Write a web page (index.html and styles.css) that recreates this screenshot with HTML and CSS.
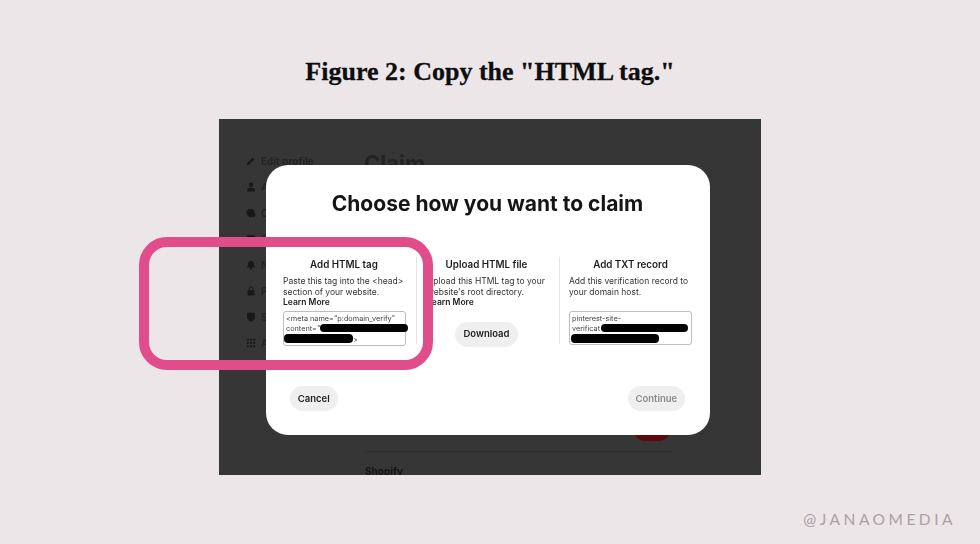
FILE: index.html
```html
<!DOCTYPE html>
<html lang="en">
<head>
<meta charset="utf-8">
<title>Figure 2</title>
<link rel="stylesheet" href="styles.css">
</head>
<body>
<main class="slide">
  <h1 class="title">Figure 2: Copy the "HTML tag."</h1>
  <section class="shot">
    <div class="app">
      <nav class="side">
        <div class="side-item"><svg class="ic" viewBox="0 0 12 12"><path d="M1 11l.6-2.6L8 2l2 2-6.400 6.400z"/></svg><span>Edit profile</span></div>
        <div class="side-item"><svg class="ic" viewBox="0 0 12 12"><circle cx="6" cy="3.200" r="2.700"/><path d="M1.500 11.500V9.500C1.500 7.500 3.500 6.800 6 6.800s4.500.7 4.500 2.700v2z"/></svg><span>Account</span></div>
        <div class="side-item"><svg class="ic" viewBox="0 0 12 12"><circle cx="5.500" cy="6" r="5"/><circle cx="9" cy="8.500" r="2.500"/></svg><span>Claim</span></div>
        <div class="side-item"><svg class="ic" viewBox="0 0 12 12"><rect x="1" y="1.500" width="10" height="9" rx="1.500"/></svg><span>Tune</span></div>
        <div class="side-item"><svg class="ic" viewBox="0 0 12 12"><path d="M6 .8c2.500 0 3.600 2 3.600 4.200 0 2 1.400 3 1.400 4H1c0-1 1.400-2 1.400-4C2.400 2.800 3.500.8 6 .8z"/><circle cx="6" cy="10.300" r="1.400"/></svg><span>Notifications</span></div>
        <div class="side-item"><svg class="ic" viewBox="0 0 12 12"><rect x="1.800" y="5" width="8.400" height="6.500" rx="1.500"/><path class="ln" d="M3.700 5.500V3.500a2.300 2.300 0 0 1 4.600 0v2"/></svg><span>Privacy</span></div>
        <div class="side-item"><svg class="ic" viewBox="0 0 12 12"><path d="M1.200 1h9.600v5c0 3-2.500 4.800-4.800 5.800C3.700 10.800 1.200 9 1.200 6z"/></svg><span>Security</span></div>
        <div class="side-item"><svg class="ic" viewBox="0 0 12 12"><path d="M1 1h2.400v2.400H1zM4.800 1h2.400v2.400H4.800zM8.600 1H11v2.400H8.600zM1 4.800h2.400v2.400H1zM4.800 4.800h2.400v2.400H4.800zM8.600 4.800H11v2.400H8.600zM1 8.600h2.400V11H1zM4.800 8.600h2.400V11H4.800zM8.600 8.600H11V11H8.600z"/></svg><span>Apps</span></div>
      </nav>
      <div class="content">
        <h2 class="claim">Claim</h2>
        <div class="red-row"><span class="red-btn"></span></div>
        <p class="shopify">Shopify</p>
      </div>
    </div>

    <div class="modal">
      <h2 class="modal-title">Choose how you want to claim</h2>
      <div class="cols">
        <div class="col col-a">
          <h3 class="col-title">Add HTML tag</h3>
          <p class="col-text">Paste this tag into the &lt;head&gt;<br>section of your website.</p>
          <p class="learn">Learn More</p>
          <div class="code code-a">&lt;meta name="p:domain_verify"<br>content="<span class="bar bar-a1"></span><br><span class="bar bar-a2"></span>&gt;</div>
        </div>
        <div class="col col-b">
          <h3 class="col-title">Upload HTML file</h3>
          <p class="col-text">Upload this HTML tag to your<br>website's root directory.</p>
          <p class="learn">Learn More</p>
          <div class="dl-wrap"><span class="pill">Download</span></div>
        </div>
        <div class="col col-c">
          <h3 class="col-title">Add TXT record</h3>
          <p class="col-text">Add this verification record to<br>your domain host.</p>
          <div class="code code-c">pinterest-site-<br>verificat<span class="bar bar-c1"></span><br><span class="bar bar-c2"></span></div>
        </div>
      </div>
      <div class="modal-foot">
        <span class="pill">Cancel</span>
        <span class="pill pill-off">Continue</span>
      </div>
    </div>
  </section>
  <div class="frame"></div>
  <p class="mark">@JANAOMEDIA</p>
</main>
</body>
</html>
```
FILE: styles.css
```css
* { box-sizing: border-box; }
html, body { margin: 0; height: 100%; }
body { background: #ede6e9; overflow: hidden; }
.slide { position: relative; width: 980px; height: 544px; padding-top: 52px; }
.title {
  margin: 0; height: 67px; text-align: center;
  font: 700 26px/40px "Liberation Serif", serif; color: #0e0e0e;
  -webkit-text-stroke: .3px #0e0e0e;
}
.shot {
  position: relative; width: 542px; height: 356px; margin-left: 219px;
  background: #363636; overflow: hidden; font-family: Inter, "Liberation Sans", sans-serif;
}
.app { display: flex; height: 100%; filter: blur(.5px); color: #232323; }
.side { width: 146px; padding: 29px 0 0 27px; }
.side-item {
  display: flex; align-items: center; gap: 5px; height: 26px;
  font-size: 10px; font-weight: 700; white-space: nowrap;
}
.ic { width: 10px; height: 10px; fill: #181818; flex: none; }
.ln { fill: none; stroke: #181818; stroke-width: 1.300; }
.content { flex: 1; padding: 30px 89px 0 0; }
.claim { margin: 0 0 0 -1px; font-size: 22px; line-height: 28px; font-weight: 700; }
.red-row {
  display: flex; justify-content: flex-end; align-items: flex-end; height: 275px;
  border-bottom: 1px solid #2e2e2e; padding: 0 1px 10px 0;
}
.red-btn { width: 38px; height: 26px; border-radius: 13px; background: #5a0a0c; }
.shopify { margin: 13px 0 0; font-size: 10px; line-height: 12px; font-weight: 700; color: #141414; }
.modal {
  position: absolute; left: 47px; top: 46px; width: 444px; height: 270px;
  background: #fff; border-radius: 22px; padding: 26px 18px 0 17px; color: #1d1d1d;
  filter: blur(.35px);
}
.modal-title {
  margin: 0; text-align: center; font-size: 21px; line-height: 26px; font-weight: 700; color: #151515;
}
.cols { display: flex; margin-top: 40px; height: 87px; }
.col { position: relative; font-size: 8.500px; line-height: 10.500px; }
.col-a { width: 134px; padding-right: 11px; border-right: 1px solid #e6e6e6; }
.col-b { width: 144px; padding: 0 13px 0 10px; border-right: 1px solid #e6e6e6; }
.col-c { flex: 1; padding-left: 9px; }
.col-title { margin: 2px 0 5px; text-align: center; font-size: 9.800px; line-height: 12px; font-weight: 600; }
.col-text { margin: 0; color: #333; white-space: nowrap; }
.learn { margin: 0; font-weight: 600; }
.code {
  margin-top: 3px; width: 123px; height: 35px; padding: 2px;
  border: 1px solid #bdbdbd; border-radius: 3px;
  font-size: 7.300px; line-height: 10px; color: #444; white-space: nowrap; background: #fff;
}
.code-c { margin-top: 14px; height: 34px; }
.bar { display: inline-block; height: 8px; background: #000; border-radius: 4px; vertical-align: -1px; }
.bar-a1 { width: 88px; }
.bar-a2 { width: 69px; height: 9px; margin-left: -2px; }
.bar-c1 { width: 87px; margin-left: 1px; }
.bar-c2 { width: 88px; height: 9px; margin-left: -1px; }
.dl-wrap { display: flex; justify-content: center; margin-top: 14px; }
.pill {
  display: inline-flex; align-items: center; justify-content: center; height: 25px; padding: 0 7.800px;
  border-radius: 13px; background: #efefef; font-size: 9.500px; font-weight: 600; color: #222;
}
.dl-wrap .pill { padding: 0 8.500px; }
.pill-off { color: #8a8a8a; }
.modal-foot { display: flex; justify-content: space-between; margin-top: 42px; padding: 0 7px; }
.frame {
  position: absolute; left: 139px; top: 237px; width: 294px; height: 133px;
  border: 10px solid #e14d8b; border-radius: 28px;
}
.mark {
  position: absolute; right: 24px; top: 510px; margin: 0;
  font: 400 15.500px/18px Lato, sans-serif; letter-spacing: 3.500px; color: #ab9fa4;
}
```
